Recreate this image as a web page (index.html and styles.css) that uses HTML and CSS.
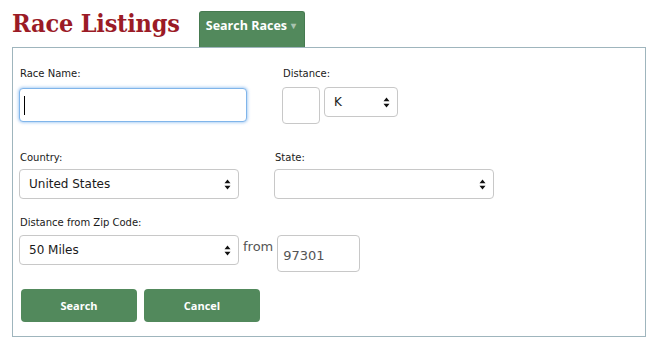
FILE: index.html
```html
<!DOCTYPE html>
<html>
<head>
<meta charset="utf-8">
<link rel="stylesheet" href="styles.css">
</head>
<body>
<div class="page">
  <div class="header">
    <h1 class="title">Race Listings</h1>
    <div class="tab">Search Races <span class="caret">&#9662;</span></div>
  </div>
  <div class="panel">
    <div class="row row1">
      <div class="field f-name">
        <label class="lbl">Race Name:</label>
        <div class="ctl input focus"><span class="cursor"></span></div>
      </div>
      <div class="field f-dist">
        <label class="lbl">Distance:</label>
        <div class="inline">
          <div class="ctl input small"></div>
          <div class="ctl select unit"><span class="val">K</span><svg class="arrows" width="7" height="11" viewBox="0 0 7 11"><path d="M3.5 0.5 L6.5 4.3 L0.5 4.3 Z M3.5 10.5 L6.5 6.7 L0.5 6.7 Z" fill="#111"/></svg></div>
        </div>
      </div>
    </div>
    <div class="row row2">
      <div class="field">
        <label class="lbl">Country:</label>
        <div class="ctl select wide"><span class="val">United States</span><svg class="arrows" width="7" height="11" viewBox="0 0 7 11"><path d="M3.5 0.5 L6.5 4.3 L0.5 4.3 Z M3.5 10.5 L6.5 6.7 L0.5 6.7 Z" fill="#111"/></svg></div>
      </div>
      <div class="field">
        <label class="lbl">State:</label>
        <div class="ctl select wide"><span class="val"></span><svg class="arrows" width="7" height="11" viewBox="0 0 7 11"><path d="M3.5 0.5 L6.5 4.3 L0.5 4.3 Z M3.5 10.5 L6.5 6.7 L0.5 6.7 Z" fill="#111"/></svg></div>
      </div>
    </div>
    <div class="row row3">
      <div class="field">
        <label class="lbl">Distance from Zip Code:</label>
        <div class="inline">
          <div class="ctl select wide"><span class="val">50 Miles</span><svg class="arrows" width="7" height="11" viewBox="0 0 7 11"><path d="M3.5 0.5 L6.5 4.3 L0.5 4.3 Z M3.5 10.5 L6.5 6.7 L0.5 6.7 Z" fill="#111"/></svg></div>
          <span class="from">from</span>
          <div class="ctl input zip"><span class="zipval">97301</span></div>
        </div>
      </div>
    </div>
    <div class="buttons">
      <button class="btn">Search</button>
      <button class="btn">Cancel</button>
    </div>
  </div>
</div>
</body>
</html>
```
FILE: styles.css
```css
* { box-sizing: border-box; }
html, body { margin: 0; padding: 0; background: #fff; }
body { font-family: "DejaVu Sans", sans-serif; color: #222; }
.page { width: 650px; padding: 0 0 0 12px; }

.header { display: flex; align-items: flex-end; height: 47px; }
.title {
  margin: 0 0 8px 0;
  font-family: "DejaVu Serif Condensed", "DejaVu Serif", serif;
  font-stretch: condensed;
  font-weight: bold;
  font-size: 25px;
  line-height: 30px;
  color: #9b1b26;
  letter-spacing: -0.2px;
}
.tab {
  margin-left: 19px;
  width: 106px;
  height: 36px;
  background: #52895c;
  border: 1px solid #467a50;
  border-bottom: none;
  border-radius: 3px 3px 0 0;
  color: #fff;
  font-family: "Open Sans", sans-serif;
  font-weight: bold;
  font-size: 12.5px;
  padding: 5px 0 0 6px;
  white-space: nowrap;
}
.caret { color: #a9c3b0; font-size: 10px; margin-left: 1px; position: relative; top: -1px; }

.panel {
  width: 634px;
  height: 290px;
  border: 1px solid #9fb5bd;
  padding: 20px 0 0 6px;
}
.row { display: flex; gap: 35px; }
.field { display: flex; flex-direction: column; }
.lbl { font-size: 10px; line-height: 12px; padding-left: 1px; color: #1a1a1a; }
.row1 .lbl { margin-bottom: 7px; }
.row2 { margin-top: 28px; }
.row2 .lbl { margin-bottom: 5px; }
.row3 { margin-top: 18px; }
.row3 .lbl { margin-bottom: 6px; }

.inline { display: flex; align-items: flex-start; }
.ctl { border: 1px solid #c8c8c8; border-radius: 4px; background: #fff; }
.input.focus {
  width: 228px; height: 34px; margin-top: 1px;
  border-color: #80b5ea;
  box-shadow: 0 0 3px 1px rgba(110, 170, 235, 0.55);
  display: flex; align-items: center; padding-left: 4px;
}
.cursor { width: 1px; height: 19px; background: #000; }
.input.small { width: 38px; height: 37px; }
.select {
  display: flex; align-items: center; justify-content: space-between;
  height: 30px; padding: 0 7px 0 9px;
  font-size: 12px; color: #1a1a1a;
}
.select.unit { width: 74px; margin-left: 4px; }
.select.wide { width: 220px; }
.arrows { display: block; }
.from { font-size: 13px; color: #555; margin: 2px 4px 0 4px; line-height: 20px; }
.zip {
  width: 83px; height: 37px;
  font-size: 13px; color: #555;
  display: flex; align-items: center; padding: 3px 0 0 5px;
}

.buttons { display: flex; gap: 7px; margin-top: 17px; padding-left: 2px; }
.btn {
  width: 116px; height: 33px;
  border: none; border-radius: 4px;
  background: #52895c;
  color: #fff;
  font-family: "Open Sans", sans-serif;
  font-weight: bold;
  font-size: 11px;
  padding: 0;
}
```
